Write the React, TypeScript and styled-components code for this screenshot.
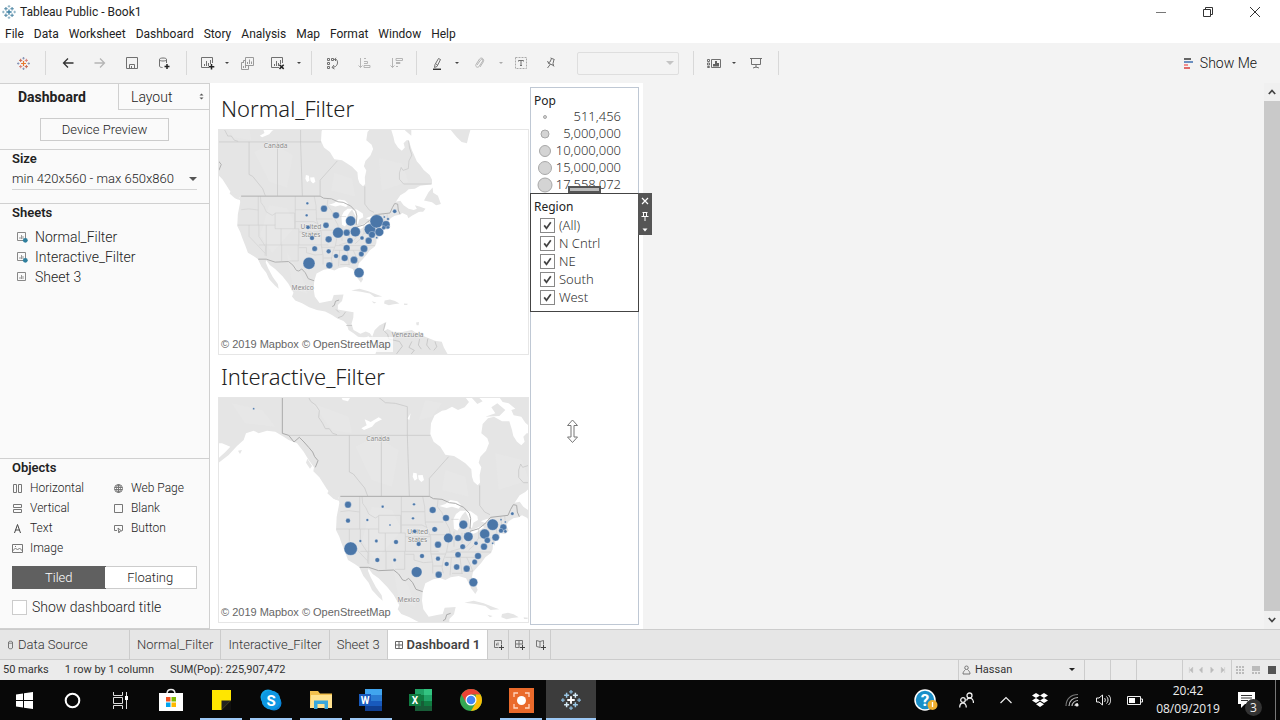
import React from "react";
import styled, { createGlobalStyle, css } from "styled-components";

const ui = `Roboto, "Liberation Sans", sans-serif`;
const system = `"Open Sans", "Noto Sans", sans-serif`;
const viz = `"Noto Sans", "Open Sans", sans-serif`;

const GlobalStyle = createGlobalStyle`
  * { box-sizing: border-box; }
  body { margin: 0; background: #f3f3f3; color: #333; font-family: ${ui}; font-size: 14px; }
  button, input, select { font: inherit; color: inherit; }
  button { border: 0; padding: 0; background: none; }
  h1, h2, h3, ul { margin: 0; padding: 0; font: inherit; list-style: none; }
  svg { display: block; }
`;

const Window = styled.div`
  display: flex;
  flex-direction: column;
  min-height: 100vh;
`;

/* ---------- title and menu ---------- */

const TitleBar = styled.header`
  display: flex;
  align-items: center;
  height: 22px;
  padding: 1px 2px 0;
  background: #fff;
  font: 12px/20px ${ui};
  color: #222;
`;
const AppTitle = styled.h1`
  flex: 1;
  padding-left: 4px;
`;
const WindowButton = styled.button`
  display: grid;
  place-items: center;
  width: 47px;
  height: 20px;
`;
const MenuBar = styled.nav`
  display: flex;
  gap: 10px;
  height: 21px;
  padding: 3px 0 0 5px;
  background: #fff;
  font: 12px/18px ${ui};
  color: #222;
`;
const MenuItem = styled.button`
  height: 18px;
`;

/* ---------- toolbar ---------- */

const Toolbar = styled.div`
  display: flex;
  align-items: center;
  height: 40px;
  padding-left: 7px;
  background: #f3f3f3;
`;
const ToolButton = styled.button<{ $w?: number; $faded?: boolean }>`
  display: grid;
  place-items: center;
  width: ${(p) => p.$w ?? 32}px;
  height: 28px;
  color: ${(p) => (p.$faded ? "#b5b5b5" : "#707070")};
`;
const CaretButton = styled.button<{ $faded?: boolean }>`
  width: 12px;
  height: 28px;
  display: grid;
  place-items: center;
  &::after {
    content: "";
    border: 2px solid transparent;
    border-top-color: ${(p) => (p.$faded ? "#aaa" : "#444")};
    border-bottom: 0;
  }
`;
const Divider = styled.span`
  width: 1px;
  height: 24px;
  margin: 0 6px;
  background: #d8d8d8;
`;
const arrow = (color: string) => css`
  position: relative;
  &::after {
    content: "";
    position: absolute;
    right: 5px;
    top: 50%;
    margin-top: -2px;
    border: 4px solid transparent;
    border-top-color: ${color};
    border-bottom: 0;
    pointer-events: none;
  }
`;
const FitBox = styled.label`
  ${arrow("#c4c4c4")}
  display: block;
  width: 102px;
  margin: 0 8px 0 10px;
`;
const FitSelect = styled.select`
  display: block;
  appearance: none;
  width: 100%;
  height: 23px;
  border: 1px solid #d6d6d6;
  border-radius: 2px;
  background: #f3f3f3;
`;
const ShowMe = styled.button`
  display: flex;
  align-items: center;
  gap: 6px;
  margin: 0 23px 0 auto;
  font-size: 14px;
  font-weight: 300;
  color: #111;
`;

/* ---------- workspace ---------- */

const Workspace = styled.div`
  display: flex;
  flex: 1;
  min-height: 546px;
`;
const Sidebar = styled.aside`
  display: flex;
  flex-direction: column;
  width: 210px;
  border: 1px solid #d0d0d0;
  border-width: 1px 1px 0 0;
  background: #fafafa;
  font-weight: 300;
  color: #222;
`;
const SideTabs = styled.div`
  display: flex;
  height: 26px;
`;
const SideTab = styled.button<{ $active?: boolean }>`
  flex: ${(p) => (p.$active ? "0 0 118px" : "1")};
  padding: 0 12px;
  text-align: left;
  ${(p) =>
    p.$active
      ? css`
          padding-left: 18px;
          font-weight: 700;
          color: #222;
        `
      : css`
          display: flex;
          align-items: center;
          justify-content: space-between;
          padding-right: 5px;
          border: 1px solid #d0d0d0;
          border-width: 0 0 1px 1px;
        `}
`;
const Section = styled.section<{ $h?: number }>`
  padding: 0 12px;
  border-bottom: 1px solid #d0d0d0;
  ${(p) => (p.$h ? `height: ${p.$h}px;` : "flex: 1;")}
`;
const SectionTitle = styled.h2`
  height: 18px;
  line-height: 18px;
  font-weight: 600;
  font-size: 13px;
  color: #222;
`;
const PreviewButton = styled.button`
  display: block;
  width: 129px;
  height: 23px;
  margin: 8px 0 0 28px;
  border: 1px solid #ccc;
  font-size: 13px;
`;
const SizeBox = styled.label`
  ${arrow("#555")}
  display: block;
  width: 185px;
  &::after {
    right: 0;
  }
`;
const SizeSelect = styled.select`
  display: block;
  appearance: none;
  width: 100%;
  height: 22px;
  padding: 0 14px 0 0;
  border: 0;
  border-bottom: 1px solid #d6d6d6;
  background: transparent;
  font-size: 13px;
`;
const SheetList = styled.ul`
  padding-top: 5px;
`;
const SheetRow = styled.li`
  display: flex;
  align-items: center;
  gap: 7px;
  height: 20px;
  padding-left: 4px;
`;
const ObjectGrid = styled.ul`
  display: grid;
  grid-template-columns: 101px 1fr;
  grid-auto-rows: 20px;
  padding-top: 1px;
  font-size: 12px;
`;
const ObjectItem = styled.li`
  display: flex;
  align-items: center;
  gap: 7px;
`;
const Segmented = styled.div`
  display: grid;
  grid-template-columns: 1fr 1fr;
  height: 23px;
  margin-top: 8px;
  border: 1px solid #ccc;
`;
const Segment = styled.button<{ $on?: boolean }>`
  margin: ${(p) => (p.$on ? "-1px" : "0")};
  font-size: 13px;
  background: ${(p) => (p.$on ? "#606060" : "#fff")};
  color: ${(p) => (p.$on ? "#fff" : "#222")};
`;
const TitleToggle = styled.label`
  display: flex;
  align-items: center;
  gap: 5px;
  height: 36px;
`;
const Tick = styled.input`
  appearance: none;
  flex: none;
  width: 15px;
  height: 15px;
  margin: 0;
  border: 1px solid #ccc;
  background: #fff;
  &:checked {
    border-color: #888;
    background: #fff
      url("data:image/svg+xml,%3Csvg xmlns='http://www.w3.org/2000/svg' viewBox='0 0 13 13'%3E%3Cpath d='M3.2 6.4l2.3 2.9 4.3-6' fill='none' stroke='%23444' stroke-width='1.7'/%3E%3C/svg%3E");
  }
`;

/* ---------- dashboard ---------- */

const Canvas = styled.main`
  display: flex;
  flex: 1;
`;
const DashboardSheet = styled.div`
  display: flex;
  width: 433px;
  padding: 4px 4px 4px 8px;
  background: #fff;
`;
const Views = styled.div`
  width: 311px;
`;
const ViewTitle = styled.h2`
  height: 42px;
  padding: 0 3px;
  font: 300 22px/42px ${viz};
  color: #222;
`;
const MapFrame = styled.div`
  position: relative;
  height: 226px;
  border: 1px solid #e6e6e6;
  overflow: hidden;
`;
const Credit = styled.span`
  position: absolute;
  left: 0;
  bottom: 2px;
  padding: 0 2px;
  background: rgba(255, 255, 255, 0.75);
  font: 11px/15px "Liberation Sans", sans-serif;
  color: #666;
`;
const LegendColumn = styled.div`
  display: flex;
  flex-direction: column;
  width: 109px;
  margin-left: 1px;
  border: 1px solid #bfc8d4;
  font: 300 13px/17px ${viz};
  color: #333;
`;
const CardTitle = styled.h3`
  padding-left: 3px;
  font: 12px/18px ${viz};
  color: #222;
`;
const SizeLegend = styled.section`
  position: relative;
  height: 105px;
  padding-top: 4px;
`;
const SizeList = styled.ul`
  margin-top: -2px;
`;
const SizeRow = styled.li`
  display: flex;
  align-items: center;
  height: 17px;
  padding: 0 17px 0 4px;
`;
const Bubble = styled.svg`
  width: 20px;
  height: 16px;
`;
const SizeValue = styled.span`
  flex: 1;
  text-align: right;
`;
const DragHandle = styled.span`
  position: absolute;
  left: 37px;
  bottom: 0;
  width: 33px;
  height: 7px;
  border: 2px solid #555;
  background: #bbb;
`;
const FilterCard = styled.section`
  position: relative;
  height: 119px;
  margin: 0 -1px;
  padding-top: 4px;
  border: 1px solid #444;
`;
const FilterRow = styled.label`
  display: flex;
  align-items: center;
  gap: 4px;
  height: 18px;
  padding: 1px 0 0 9px;
`;
const CardTools = styled.div`
  position: absolute;
  left: 100%;
  top: -1px;
  display: grid;
  width: 14px;
  height: 42px;
  background: #555;
  color: #fff;
`;
const CardTool = styled.button`
  display: grid;
  place-items: center;
`;
const ResizePointer = styled.svg`
  margin: 107px 0 0 35px;
`;
const Scrollbar = styled.div`
  display: flex;
  flex-direction: column;
  width: 16px;
  background: #f0f0f0;
`;
const ScrollButton = styled.button`
  display: grid;
  place-items: center;
  height: 18px;
`;
const ScrollThumb = styled.div`
  flex: 1;
  background: #c9c9c9;
`;

/* ---------- sheet tabs and status ---------- */

const TabStrip = styled.nav`
  display: flex;
  height: 30px;
  border-top: 1px solid #ccc;
  background: #e6e6e6;
  color: #333;
`;
const SheetTab = styled.button<{ $active?: boolean; $wide?: boolean }>`
  display: flex;
  align-items: center;
  gap: 4px;
  width: ${(p) => (p.$wide ? "130px" : "auto")};
  padding: 0 7px;
  border-right: 1px solid #ccc;
  font-size: 13px;
  font-weight: 300;
  ${(p) => p.$active && "background: #fff; font-weight: 600; color: #444;"}
`;
const NewTab = styled.button`
  display: grid;
  place-items: center;
  width: 21px;
  border-right: 1px solid #ccc;
  color: #777;
`;
const StatusBar = styled.footer`
  display: flex;
  height: 21px;
  border-top: 1px solid #ccc;
  background: #ebebeb;
  font-size: 11px;
  line-height: 20px;
  color: #333;
`;
const Marks = styled.div`
  display: flex;
  flex: 1;
  gap: 16px;
  padding-left: 3px;
`;
const StatusCell = styled.div<{ $w: number }>`
  display: flex;
  align-items: center;
  justify-content: space-around;
  width: ${(p) => p.$w}px;
  border-left: 1px solid #ccc;
`;
const UserBox = styled.label`
  ${arrow("#222")}
  display: flex;
  align-items: center;
  gap: 4px;
  width: 126px;
  padding-left: 3px;
  border-left: 1px solid #ccc;
  color: #777;
  &::after {
    right: 9px;
    border-width: 3px 3px 0;
  }
`;
const UserSelect = styled.select`
  appearance: none;
  flex: 1;
  min-width: 0;
  border: 0;
  background: transparent;
  font-size: 11px;
  color: #333;
`;

/* ---------- taskbar ---------- */

const Taskbar = styled.div`
  display: flex;
  align-items: center;
  height: 40px;
  background: #080808;
  color: #eee;
`;
const TaskGroup = styled.div<{ $gap?: number }>`
  display: flex;
  margin-left: ${(p) => p.$gap ?? 0}px;
`;
const TaskButton = styled.button<{ $w?: number; $open?: boolean; $active?: boolean }>`
  display: grid;
  place-items: center;
  width: ${(p) => p.$w ?? 50}px;
  height: 40px;
  background: ${(p) => (p.$active ? "#3c3c3c" : "none")};
  ${(p) =>
    p.$open &&
    css`
      position: relative;
      &::after {
        content: "";
        position: absolute;
        inset: auto ${p.$active ? 0 : 4}px 0;
        height: 2px;
        background: #9cc8f5;
      }
    `}
`;
const Tray = styled.div`
  display: flex;
  align-items: center;
  margin-left: auto;
`;
const Clock = styled.time`
  width: 72px;
  text-align: center;
  font: 12px/18px ${system};
`;
const Notifications = styled.button`
  position: relative;
  display: grid;
  place-items: center;
  width: 52px;
  height: 40px;
  padding-right: 6px;
  border-right: 1px solid #777;
  margin-right: 4px;
`;
const Count = styled.span`
  position: absolute;
  left: 21px;
  top: 19px;
  width: 17px;
  height: 17px;
  border-radius: 50%;
  background: #333;
  font: 12px/17px ${system};
  text-align: center;
`;

/* ---------- icons ---------- */

type IconProps = { w?: number; h?: number; box?: string; sw?: number; color?: string; children: React.ReactNode };
const Icon = ({ w = 14, h = 14, box, sw = 1, color = "currentColor", children }: IconProps) => (
  <svg width={w} height={h} viewBox={box ?? `0 0 ${w} ${h}`} fill="none" stroke={color} strokeWidth={sw} aria-hidden="true">
    {children}
  </svg>
);

const TableauMark = ({ size, colors }: { size: number; colors: string[] }) => (
  <Icon w={size} h={size} box="0 0 16 16" sw={1.2}>
    <path d="M8 5v6M5 8h6" stroke={colors[0]} strokeWidth={1.5} />
    <path d="M4.500 2.200v4M2.500 4.200h4M11.500 9.800v4M9.500 11.800h4" stroke={colors[1]} />
    <path d="M11.500 2.200v4M9.500 4.200h4M4.500 9.800v4M2.500 11.800h4" stroke={colors[2]} />
    <path d="M8 0v3M6.500 1.500h3M8 13v3M6.500 14.500h3M1.500 6.500v3M0 8h3M14.500 6.500v3M13 8h3" stroke={colors[3]} strokeWidth={1} />
  </Icon>
);

const SheetGlyph = ({ used }: { used?: boolean }) => (
  <Icon w={12} h={12}>
    <path d="M1.500 1.500h8v8h-8z" stroke="#888" />
    <path d="M4 8V6M5.500 8V4M7 8V5" stroke="#999" />
    {used && <circle cx="9.300" cy="9.300" r="2.400" fill="#2f7f9d" stroke="none" />}
  </Icon>
);
const ChartBox = ({ mark }: { mark: string }) => (
  <Icon w={15} h={14}>
    <path d="M9 11.500H1.500V1.500h11V7" />
    <path d="M4.500 10V8M6.500 10V5M8.500 10V7M10.500 8V4" />
    <path d={mark} stroke="#222" strokeWidth={1.5} />
  </Icon>
);

/* ---------- maps ---------- */

const LAND =
  "M-60 60H18L18 112H760L771 126 758 142 738 150 720 140 702 150 690 152 668 166 657 190 655 222 665 245 685 260 700 284 726 288 742 298 760 310 778 328 780 350 785 365 797 376 804 368 803 345 808 322 800 308 805 290 822 272 831 250 826 235 808 220 812 192 828 175 846 170 870 184 892 184 900 210 904 228 915 245 928 256 938 245 934 230 944 220 951 219 956 235 962 253 979 292 990 304 1002 321 1022 338 1030 354 1030 369 990 374 972 384 951 386 940 396 923 406 908 428 923 425 934 440 951 452 968 456 985 450 990 460 962 475 950 484 946 474 930 466 920 472 904 475 890 484 883 496 890 512 880 522 864 520 861 538 850 543 848 557 843 550 842 568 836 580 820 592 808 608 796 622 783 636 780 650 790 670 797 690 790 702 778 686 771 672 762 655 740 648 716 652 700 660 684 654 664 658 640 670 632 696 630 722 634 748 650 770 675 765 692 762 698 743 731 741 726 763 712 777 712 792 740 797 765 801 764 820 758 840 765 861 788 874 806 866 820 872 828 884 836 862 852 846 876 833 872 850 866 866 880 858 900 868 930 868 962 861 978 872 1007 884 1040 898 1063 901 1070 920 1084 945 838 945 846 920 850 905 838 893 826 896 816 882 800 888 780 884 765 872 748 861 742 842 731 831 710 822 692 811 669 799 641 794 615 784 591 771 568 762 557 748 562 735 545 705 525 680 500 655 482 642 470 626 468 632 476 652 492 682 509 706 512 722 500 712 480 690 470 668 454 648 442 622 428 612 408 600 400 578 388 548 382 530 372 510 374 470 382 430 380 412 372 420 345 388 335 372 322 352 304 334 306 322 290 300 275 275 255 250 230 240 215 230 190 215 165 212 140 220 125 212 102 220 95 240 75 258 50 285 20 308 18 296 40 276 55 260 30 250 18 250Z";
const ISLANDS =
  "M350 392L378 410 384 424 364 416 346 400ZM778 112L800 112 812 124 796 132ZM820 170L850 160 838 142 856 130 880 150 862 168ZM862 112H960V205L940 188 928 170 905 166 898 150 910 146 890 130 872 126ZM1003 424L1018 396 1032 380 1034 398 1050 408 1060 436 1044 440 1030 430ZM972 440L990 445 1008 452 1000 462 984 462ZM1092 184H1160L1154 205 1148 230 1130 226 1112 208ZM757 728L785 722 815 730 845 742 862 748 836 750 820 738 790 732ZM870 762L888 758 905 763 920 772 900 774 884 778 868 772ZM826 764L842 768 834 772ZM935 772L948 773 946 777 936 777ZM976 836L986 834 985 845 978 845ZM78 272L90 270 84 282ZM286 296L300 318 294 326 282 308Z";
const LAKES =
  "M448 205L464 196 458 178 476 186 500 172 510 178 490 188 480 200 456 210ZM388 112L415 112 408 124 392 120ZM604 338L614 340 616 356 608 362 602 350ZM618 346L632 345 636 360 628 366 620 358ZM586 176L596 160 592 180ZM682 438L700 432 715 420 736 424 748 436 740 446 720 440 704 444ZM726 506L724 478 732 462 745 452 762 452 750 466 742 480 744 500 736 512ZM760 454L776 454 796 468 798 480 784 488 780 504 772 500 772 478ZM766 520L786 508 812 496 816 502 792 518 776 524ZM806 484L826 476 836 480 822 490Z";
const SHADE =
  "M60 130l90 20 40 50-90-10zM430 260l60-30 70 40-20 110-60-20zM300 130l110 40 10 50-60-10zM640 120l50 10-30 40-40 10zM850 280l80 20 20 60-90 30zM700 330l60 20 10 60-80-20zM540 600l50 80 20 60-50-20zM480 440l60 10 30 60-80 90-40-60z";
const BORDERS =
  "M211 112V220L230 226 246 246 262 232 276 246 290 262 302 276 308 290 318 302 310 322M385 409H652L664 416 690 418 712 428 730 430 755 442 772 460 776 476 774 506M774 514L800 506 818 492 836 472 888 466 896 448 904 434 914 436 916 456 922 470M443 622H470L500 632 545 630 560 642 572 660 580 662 590 655 602 668 612 688 632 695M693 782L700 778 704 764 716 760";
const SOUTHERN_BORDERS =
  "M706 792L716 802M738 800L728 814 712 820M740 846L760 846M872 838L866 862 880 876 884 892 920 900 930 916 910 942M962 900L952 920 970 930 960 942M988 892L984 912 994 926M1016 890L1012 912 1024 928M1040 900L1046 918 1036 930";
const PROVINCES =
  "M230 226H655M290 112L296 124 312 136 322 152 320 172 332 190 340 206 352 206 362 220 375 224M412 226V336L424 342 440 362 458 384 467 408M508 226V408M500 112L520 128 550 130 586 140V226L592 408M652 408V355L710 290M803 376V436L818 456 834 464M951 222L954 246 962 270 952 290 950 316 932 322 926 312 920 330 920 352 934 368 1028 368";
const STATES =
  "M385 455L410 452 443 456M443 409V507M373 507H500M450 409L452 430 462 444 470 462 490 474 500 468M500 466H566V519H500ZM568 409V519M568 455H638M568 495H630L644 502M566 519H580V530H654M445 507V545L468 580 466 610M470 507V612M412 507V545L466 602M520 519V574H445M580 530V574M522 574V628M578 574V628M548 628H578M520 574H680M580 583H606V600L634 608 660 606M632 409L638 440 640 490 648 512 656 530V574L662 610V640M640 486H694M648 524H700M678 420L676 440 690 458 700 484 712 506 716 530 708 552 704 574 694 600 690 622 694 640M656 582H700M664 618H692M718 478H740M726 514V560M750 518V548M704 576H838M700 592H790M718 592L714 646M744 592L750 642M720 640H752M764 592L778 622 782 634M752 634H782M774 514L776 546 762 562 744 566 716 574M800 506V534H850M800 534L786 556 770 570M812 534L830 548M840 534L846 548M852 500L856 530M866 470L870 500M878 468L880 490M864 500H884M862 510H880";

const Geography = () => (
  <g strokeLinejoin="round">
    <path d={LAND} fill="#e5e5e5" />
    <path d={ISLANDS} fill="#e5e5e5" />
    <path d={SHADE} fill="#e7e7e7" />
    <path d={LAKES} fill="#fff" />
    <g fill="none" stroke="#cfcfcf" strokeWidth="2">
      <path d={STATES} />
      <path d={PROVINCES} stroke="#c2c2c2" />
      <path d={SOUTHERN_BORDERS} stroke="#b5b5b5" />
      <path d={BORDERS} stroke="#aaa" strokeWidth="3" />
    </g>
  </g>
);

type Dot = [number, number, number];
type Label = [number, number, string];

const NORMAL_DOTS: Dot[] = [
  [286, 355, 4], [284, 391, 4], [288, 427, 6], [300, 459, 7], [308, 491, 8], [336, 371, 10], [342, 421, 9], [372, 391, 10],
  [350, 463, 10], [350, 499, 7], [291, 535, 18], [352, 541, 10], [372, 513, 7], [378, 443, 16], [404, 443, 10], [416, 408, 15],
  [430, 440, 15], [414, 467, 9], [404, 489, 10], [398, 519, 10], [426, 525, 11], [441, 563, 15], [448, 507, 8], [456, 491, 11],
  [450, 459, 6], [470, 467, 10], [474, 433, 17], [494, 409, 20], [502, 441, 13], [480, 449, 10], [494, 458, 3], [522, 419, 12],
  [528, 402, 4], [517, 396, 3], [548, 379, 6], [515, 428, 6], [528, 427, 5],
];
const INTERACTIVE_DOTS: Dot[] = [
  [125, 146, 3], [408, 434, 10], [408, 482, 7], [466, 480, 4], [512, 440, 4], [534, 495, 3], [606, 433, 4], [603, 475, 4],
  [416, 566, 20], [445, 543, 4], [493, 543, 5], [552, 546, 7], [496, 600, 7], [548, 600, 5], [608, 514, 6], [620, 552, 7],
  [630, 588, 7], [614, 636, 16], [662, 450, 10], [668, 508, 8], [702, 474, 10], [678, 554, 10], [678, 596, 7], [680, 644, 10],
  [704, 612, 7], [709, 534, 14], [738, 534, 10], [754, 494, 13], [769, 530, 14], [752, 560, 8], [738, 584, 9], [734, 621, 9],
  [764, 626, 10], [784, 667, 13], [788, 606, 8], [798, 588, 10], [792, 550, 6], [816, 560, 10], [818, 522, 15], [842, 494, 17],
  [826, 541, 9], [851, 532, 11], [842, 550, 3], [874, 502, 10], [867, 512, 7], [880, 514, 5], [880, 486, 3], [867, 479, 3],
  [901, 461, 5],
];

type MapProps = { name: string; box: string; place?: string; labels: Label[]; dots: Dot[] };
const BubbleMap = ({ name, box, place, labels, dots }: MapProps) => (
  <MapFrame>
    <svg width="309" height="224" viewBox={box} role="img" aria-label={name}>
      <g transform={place}>
        <Geography />
      </g>
      <g fill="#8a8a8a" stroke="#f0f0f0" strokeWidth="3" paintOrder="stroke" fontFamily={viz} fontSize="20" textAnchor="middle">
        {labels.map(([x, y, text]) => (
          <text key={text} x={x} y={y}>{text}</text>
        ))}
      </g>
      <g fill="#4a76a8" stroke="#e6eef6" strokeWidth="1">
        {dots.map(([x, y, r]) => (
          <circle key={`${x}-${y}`} cx={x} cy={y} r={r} />
        ))}
      </g>
    </svg>
    <Credit>© 2019 Mapbox © OpenStreetMap</Credit>
  </MapFrame>
);

/* ---------- data ---------- */

const MENUS = ["File", "Data", "Worksheet", "Dashboard", "Story", "Analysis", "Map", "Format", "Window", "Help"];
const SIZES: [string, number][] = [["511,456", 1.5], ["5,000,000", 4], ["10,000,000", 5.5], ["15,000,000", 6.5], ["17,558,072", 7]];
const REGIONS = ["(All)", "N Cntrl", "NE", "South", "West"];
const OBJECTS: [string, React.ReactNode][] = [
  ["Horizontal", <path key="i" d="M1.500 1.500h3v8h-3zM6.500 1.500h3v8h-3z" />],
  ["Web Page", <path key="i" d="M1.500 5.500a4 4 0 1 0 8 0a4 4 0 1 0-8 0M3.500 5.500a2 4 0 1 0 4 0a2 4 0 1 0-4 0M1.500 4.500h8M1.500 6.500h8M5.500 1.500v8" />],
  ["Vertical", <path key="i" d="M1.500 1.500h8v3h-8zM1.500 6.500h8v3h-8z" />],
  ["Blank", <path key="i" d="M1.500 1.500h8v8h-8z" />],
  ["Text", <path key="i" d="M2.500 10L5.500 1.500 8.500 10M3.500 7h4" stroke="#444" />],
  ["Button", <path key="i" d="M4 7.500H1.500v-5h8v5H8.500M5 5l3.500 3-1.800.2-.8 1.800z" />],
  ["Image", <path key="i" d="M.5 1.500h10v8H.5zM.5 8l3-3 2 2 2-2 3 3M3 3.500h1" />],
];

const App = () => (
  <Window>
    <GlobalStyle />
    <TitleBar>
      <TableauMark size={14} colors={["#3b7ea1", "#4f87a5", "#4f87a5", "#7fa8bd"]} />
      <AppTitle>Tableau Public - Book1</AppTitle>
      <WindowButton aria-label="Minimize"><Icon w={12} h={12}><path d="M1 6.500h10" stroke="#777" /></Icon></WindowButton>
      <WindowButton aria-label="Restore"><Icon w={12} h={12}><path d="M1.500 3.500h7v7h-7zM3.500 3V1.500h7v7H9" stroke="#333" /></Icon></WindowButton>
      <WindowButton aria-label="Close"><Icon w={12} h={12}><path d="M1 1l10 10M11 1L1 11" stroke="#333" /></Icon></WindowButton>
    </TitleBar>
    <MenuBar>
      {MENUS.map((m) => <MenuItem key={m}>{m}</MenuItem>)}
    </MenuBar>

    <Toolbar>
      <ToolButton aria-label="Start page"><TableauMark size={13} colors={["#e8762d", "#c9654f", "#d9827a", "#7d8bb0"]} /></ToolButton>
      <Divider />
      <ToolButton aria-label="Undo"><Icon w={12} h={12} sw={1.3}><path d="M11.500 6H1.500M6 1.500L1.500 6 6 10.500" stroke="#333" /></Icon></ToolButton>
      <ToolButton aria-label="Redo" $faded><Icon w={12} h={12} sw={1.3}><path d="M.5 6h10M6 1.500L10.500 6 6 10.500" /></Icon></ToolButton>
      <ToolButton aria-label="Save"><Icon w={12} h={12}><path d="M.5 .5h11v11H.5zM3.500 11V7.500h5V11M5.500 9v2" /></Icon></ToolButton>
      <ToolButton aria-label="New data source">
        <Icon w={13} h={13}>
          <path d="M1.500 2.500c0-1.200 1.800-1.500 3.500-1.500s3.500.3 3.500 1.500S6.700 4 5 4 1.500 3.700 1.500 2.500V9c0 1 1.300 1.500 3 1.500M8.500 2.500V6" />
          <path d="M9 7v5M6.500 9.500h5" stroke="#222" strokeWidth={1.500} />
        </Icon>
      </ToolButton>
      <Divider />
      <ToolButton $w={28} aria-label="New worksheet"><ChartBox mark="M11.500 8v5.500M8.800 10.800h5.500" /></ToolButton>
      <CaretButton aria-label="New worksheet options" />
      <ToolButton $w={28} aria-label="Duplicate" $faded><Icon w={13} h={13}><path d="M4.500 .5h8v8h-8zM4 3.500H2.500V6M2.500 5.500h-2v7h7V9M6.500 7V5M8.500 7V2.500M10.500 7V4.500M2.500 11V9M4.500 11V8" stroke="#999" /></Icon></ToolButton>
      <ToolButton aria-label="Clear sheet"><ChartBox mark="M9.500 8.700l4.200 4.200M13.700 8.700L9.500 12.900" /></ToolButton>
      <CaretButton aria-label="Clear options" />
      <Divider />
      <ToolButton $w={28} aria-label="Swap rows and columns"><Icon w={13} h={13}><path d="M1.500 1.500h2v2h-2zM5.500 1.500h2v2h-2zM1.500 5.500h2v2h-2zM1.500 9.500h2v2h-2zM8.500 2.500h2c1.500 2 1.500 5-1 7l-3 1M10 .8L8.500 2.500 10 4M8 8l-2 2.500 2.500 1.500" /></Icon></ToolButton>
      <ToolButton $w={36} aria-label="Sort ascending" $faded><Icon w={13} h={12}><path d="M2.500 1v9.500M.5 8.500l2 2 2-2M6 1.500h2M6 4.500h3.500v2H6M6 8.500h6v2H6z" /></Icon></ToolButton>
      <ToolButton $w={28} aria-label="Sort descending" $faded><Icon w={13} h={12}><path d="M2.500 1v9.500M.5 8.500l2 2 2-2M6 1.500h6.500v2H6zM6 5.500h4v1H6M6 9.500h2" /></Icon></ToolButton>
      <Divider />
      <ToolButton $w={28} aria-label="Highlight"><Icon w={10} h={13}><path d="M6.500 1.500l2 1-3.500 7-2.500 1 .5-3zM4 7l1.500 1" /><path d="M1 12.300h8" stroke="#333" strokeWidth={1.500} /></Icon></ToolButton>
      <CaretButton aria-label="Highlight options" />
      <ToolButton aria-label="Group" $faded><Icon w={11} h={12}><path d="M3 8l4-5.500c1-1 2.500 0 1.700 1.500L5 9.500c-1.500 1.700-4 .2-3-2L5.500 2c1.500-2 5-.5 4 2.500L6 10" /></Icon></ToolButton>
      <CaretButton aria-label="Group options" $faded />
      <ToolButton $w={28} aria-label="Show mark labels"><Icon w={12} h={12}><rect x=".5" y=".5" width="11" height="11" strokeDasharray="2 1" stroke="#aaa" /><path d="M3.500 4.500v-1h5v1M6 3.500v5M5 8.500h2" /></Icon></ToolButton>
      <ToolButton aria-label="Pin axes"><Icon w={10} h={12}><path d="M4.500 1l4 1.500M5.500 1.500L4 5 2 6l5.500 2.500L7 6.500l1-4M4.500 7l-3 4M1 4.500l2 1M8 9.500l-1-2" /></Icon></ToolButton>
      <FitBox><FitSelect aria-label="Fit" disabled /></FitBox>
      <Divider />
      <ToolButton $w={28} aria-label="Show or hide cards"><Icon w={14} h={11}><path d="M4.500 1.500h9v8h-9zM.5 1.500h2v2h-2zM.5 5h2v2h-2zM.5 8.500h2v1h-2z" /><path d="M7 8.500V6M9 8.500V3M11 8.500V5" stroke="#333" strokeWidth={1.500} /></Icon></ToolButton>
      <CaretButton aria-label="Card options" />
      <ToolButton aria-label="Presentation mode"><Icon w={12} h={12}><path d="M0 1.500h12M1.500 2v5.500h9V2M6 7.500v3M3 11l3-1 3 1" /></Icon></ToolButton>
      <Divider />
      <ShowMe>
        <Icon w={10} h={11} sw={2}><path d="M0 1h7" stroke="#666" /><path d="M0 4h9" stroke="#6b8fc0" /><path d="M0 7h4" stroke="#f09090" /><path d="M0 10h6" stroke="#e06a6a" /></Icon>
        Show Me
      </ShowMe>
    </Toolbar>

    <Workspace>
      <Sidebar>
        <SideTabs>
          <SideTab $active>Dashboard</SideTab>
          <SideTab>
            Layout
            <Icon w={5} h={7}><path d="M.5 2.500l2-2 2 2zM.5 4.500l2 2 2-2z" fill="#555" stroke="none" /></Icon>
          </SideTab>
        </SideTabs>
        <Section $h={40}>
          <PreviewButton>Device Preview</PreviewButton>
        </Section>
        <Section $h={54}>
          <SectionTitle>Size</SectionTitle>
          <SizeBox>
            <SizeSelect aria-label="Size"><option>min 420x560 - max 650x860</option></SizeSelect>
          </SizeBox>
        </Section>
        <Section>
          <SectionTitle>Sheets</SectionTitle>
          <SheetList>
            <SheetRow><SheetGlyph used />Normal_Filter</SheetRow>
            <SheetRow><SheetGlyph used />Interactive_Filter</SheetRow>
            <SheetRow><SheetGlyph />Sheet 3</SheetRow>
          </SheetList>
        </Section>
        <Section $h={170}>
          <SectionTitle>Objects</SectionTitle>
          <ObjectGrid>
            {OBJECTS.map(([label, art]) => (
              <ObjectItem key={label}><Icon w={11} h={11} color="#777">{art}</Icon>{label}</ObjectItem>
            ))}
          </ObjectGrid>
          <Segmented>
            <Segment $on>Tiled</Segment>
            <Segment>Floating</Segment>
          </Segmented>
          <TitleToggle><Tick type="checkbox" />Show dashboard title</TitleToggle>
        </Section>
      </Sidebar>

      <Canvas>
        <DashboardSheet>
          <Views>
            <ViewTitle>Normal_Filter</ViewTitle>
            <BubbleMap
              name="Normal_Filter map"
              box="21 135 927 672"
              place="translate(-254.6 -29.8) scale(.888)"
              labels={[[191, 188, "Canada"], [297, 433, "United"], [297, 455, "States"], [272, 615, "Mexico"], [587, 755, "Venezuela"]]}
              dots={NORMAL_DOTS}
            />
            <ViewTitle>Interactive_Filter</ViewTitle>
            <BubbleMap
              name="Interactive_Filter map"
              box="21 114 927 672"
              labels={[[498, 243, "Canada"], [617, 521, "United"], [617, 545, "States"], [590, 727, "Mexico"]]}
              dots={INTERACTIVE_DOTS}
            />
          </Views>
          <LegendColumn>
            <SizeLegend>
              <CardTitle>Pop</CardTitle>
              <SizeList>
                {SIZES.map(([value, r]) => (
                  <SizeRow key={value}>
                    <Bubble viewBox="0 0 20 16"><circle cx="10" cy="8" r={r} fill="#d4d4d4" stroke="#a8a8a8" /></Bubble>
                    <SizeValue>{value}</SizeValue>
                  </SizeRow>
                ))}
              </SizeList>
              <DragHandle />
            </SizeLegend>
            <FilterCard>
              <CardTitle>Region</CardTitle>
              {REGIONS.map((r) => (
                <FilterRow key={r}><Tick type="checkbox" defaultChecked />{r}</FilterRow>
              ))}
              <CardTools>
                <CardTool aria-label="Remove"><Icon w={8} h={8} sw={1.200}><path d="M1 1l6 6M7 1L1 7" /></Icon></CardTool>
                <CardTool aria-label="Pin"><Icon w={8} h={9}><path d="M1.500 .5h5M2.500 .5v4M5.500 .5v4M.5 4.500h7M4 4.500V9" /></Icon></CardTool>
                <CardTool aria-label="More options"><Icon w={6} h={4}><path d="M.5 .5h5L3 3.500z" fill="#fff" stroke="none" /></Icon></CardTool>
              </CardTools>
            </FilterCard>
            <ResizePointer width="13" height="25" viewBox="0 0 13 25" fill="#fff" stroke="#777">
              <path d="M6.500 1L11.500 6.500H8V18h3.500L6.500 23.500 1.500 18H5V6.500H1.500z" />
            </ResizePointer>
          </LegendColumn>
        </DashboardSheet>
      </Canvas>
      <Scrollbar>
        <ScrollButton aria-label="Scroll up"><Icon w={8} h={6} sw={1.700}><path d="M.8 5L4 1.500 7.200 5" stroke="#444" /></Icon></ScrollButton>
        <ScrollThumb />
        <ScrollButton aria-label="Scroll down"><Icon w={8} h={6} sw={1.700}><path d="M.8 1L4 4.500 7.200 1" stroke="#444" /></Icon></ScrollButton>
      </Scrollbar>
    </Workspace>

    <TabStrip>
      <SheetTab $wide>
        <Icon w={7} h={10} color="#777"><path d="M1.500 2c0-1 4-1 4 0v6c0 1-4 1-4 0zM1.500 2.500c0 1 4 1 4 0" /></Icon>
        Data Source
      </SheetTab>
      <SheetTab>Normal_Filter</SheetTab>
      <SheetTab>Interactive_Filter</SheetTab>
      <SheetTab>Sheet 3</SheetTab>
      <SheetTab $active>
        <Icon w={8} h={8} color="#666"><path d="M.5 .5h7v7h-7zM4 .5v7M.5 4h7" /></Icon>
        Dashboard 1
      </SheetTab>
      <NewTab aria-label="New worksheet"><Icon w={11} h={11}><path d="M5.500 8.500h-4v-7h7v4M3.500 6.500v-2M5 6.500v-3" /><path d="M8.500 6v5M6 8.500h5" stroke="#444" /></Icon></NewTab>
      <NewTab aria-label="New dashboard"><Icon w={11} h={11}><path d="M5.500 8.500h-4v-7h7v4M1.500 5h7M5 1.500v7" /><path d="M8.500 6v5M6 8.500h5" stroke="#444" /></Icon></NewTab>
      <NewTab aria-label="New story"><Icon w={11} h={11}><path d="M5.500 8.500l-4-1v-6l3.500 1 3.500-1v4M5 2.500v6" /><path d="M8.500 6v5M6 8.500h5" stroke="#444" /></Icon></NewTab>
    </TabStrip>

    <StatusBar>
      <Marks>
        <span>50 marks</span>
        <span>1 row by 1 column</span>
        <span>SUM(Pop): 225,907,472</span>
      </Marks>
      <UserBox>
        <Icon w={9} h={10}><path d="M4.500 1a1.700 1.700 0 1 1 0 3.500a1.700 1.700 0 1 1 0-3.500M3.500 4.500C2 6 1 7 1 9h7c0-2-1-3-2.500-4.500" /></Icon>
        <UserSelect aria-label="User"><option>Hassan</option></UserSelect>
      </UserBox>
      <StatusCell $w={26} />
      <StatusCell $w={26} />
      <StatusCell $w={46} />
      <StatusCell $w={49}>
        <Icon w={40} h={6} box="0 0 42 6"><path d="M2.500 0v6M6 0v6L3 3zM16 0v6l-3-3zM25 0v6l3-3zM36 0v6l3-3zM39.500 0v6" fill="#bbb" stroke="#bbb" strokeWidth=".5" /></Icon>
      </StatusCell>
      <StatusCell $w={49}>
        <Icon w={8} h={8}><path d="M0 1h8M0 4h8M0 7h8" strokeDasharray="2 1" strokeWidth="2" stroke="#bbb" /></Icon>
        <Icon w={8} h={8}><path d="M0 2.500h8" strokeWidth="5" stroke="#bbb" /><path d="M0 7h8" strokeDasharray="2 1" strokeWidth="2" stroke="#bbb" /></Icon>
        <Icon w={8} h={8}><path d="M0 0h8v8H0z" fill="#555" stroke="none" /></Icon>
      </StatusCell>
    </StatusBar>

    <Taskbar>
      <TaskGroup>
        <TaskButton $w={48} aria-label="Start"><svg width="17" height="17" viewBox="0 0 17 17" fill="#fff"><path d="M0 2.500l7-1V8H0zM8 1.300L17 0v8H8zM0 9h7v6.500l-7-1zM8 9h9v8l-9-1.300z" /></svg></TaskButton>
        <TaskButton $w={48} aria-label="Cortana"><Icon w={17} h={17} sw={2}><circle cx="8.500" cy="8.500" r="6.800" stroke="#fff" /></Icon></TaskButton>
        <TaskButton $w={48} aria-label="Task view"><Icon w={17} h={17}><path d="M1.500 0v3.500h9V0M1.500 5.500h9v6h-9zM1.500 17v-3.500h9V17M14.500 0v17" stroke="#ddd" /><path d="M14.500 4v4" stroke="#fff" strokeWidth="3" /></Icon></TaskButton>
      </TaskGroup>
      <TaskGroup $gap={2}>
        <TaskButton aria-label="Store">
          <svg width="24" height="24" viewBox="0 0 24 24"><path d="M8 6c0-6 8-6 8 0" fill="none" stroke="#eee" strokeWidth="1.500" /><path d="M0 5h24v18H0z" fill="#fff" /><path d="M7 9h4.500v4.500H7z" fill="#f25022" /><path d="M12.500 9H17v4.500h-4.500z" fill="#7fba00" /><path d="M7 14.500h4.500V19H7z" fill="#00a4ef" /><path d="M12.500 14.500H17V19h-4.500z" fill="#ffb900" /></svg>
        </TaskButton>
        <TaskButton $open aria-label="Sticky Notes"><svg width="19" height="20" viewBox="0 0 19 20"><path d="M0 0h19v11l-9 9H0z" fill="#ffe600" /><path d="M19 10.500V20H9.500z" fill="#111" /><path d="M19 10.500h-9.500V20z" fill="#222" /></svg></TaskButton>
        <TaskButton $open aria-label="Skype">
          <svg width="22" height="22" viewBox="0 0 22 22"><circle cx="8" cy="8" r="7.500" fill="#12a5e8" /><circle cx="14" cy="14" r="7.500" fill="#0a84d8" /><circle cx="11" cy="11" r="9.500" fill="#0d97e2" /><text x="11" y="16.500" fill="#fff" fontFamily="Roboto" fontWeight="700" fontSize="15" textAnchor="middle">S</text></svg>
        </TaskButton>
        <TaskButton $open aria-label="File Explorer"><svg width="22" height="20" viewBox="0 0 22 20"><path d="M0 1h8l2 2.500h12V18H0z" fill="#f2c04e" /><path d="M1 5h21v13H0z" fill="#ffe28f" /><path d="M4 19v-8.500h14V19h-3.500v-5h-7v5z" fill="#38a8dd" /></svg></TaskButton>
        <TaskButton $open aria-label="Word">
          <svg width="24" height="23" viewBox="0 0 24 23"><path d="M6 0h17v6H6z" fill="#41a5ee" /><path d="M6 6h17v6H6z" fill="#2b7cd3" /><path d="M6 12h17v5H6z" fill="#185abd" /><path d="M6 17h17v5H6z" fill="#103f91" /><path d="M0 5h12v12H0z" fill="#185abd" /><text x="6" y="14.500" fill="#fff" fontFamily="Roboto" fontWeight="700" fontSize="10" textAnchor="middle">W</text></svg>
        </TaskButton>
        <TaskButton aria-label="Excel">
          <svg width="24" height="23" viewBox="0 0 24 23"><path d="M6 0h9v6H6z" fill="#21a366" /><path d="M15 0h8v6h-8z" fill="#33c481" /><path d="M6 6h9v6H6z" fill="#107c41" /><path d="M15 6h8v6h-8z" fill="#21a366" /><path d="M6 12h17v10H6z" fill="#185c37" /><path d="M15 12h8v5h-8z" fill="#107c41" /><path d="M0 5h12v12H0z" fill="#107c41" /><text x="6" y="14.500" fill="#fff" fontFamily="Roboto" fontWeight="700" fontSize="10" textAnchor="middle">X</text></svg>
        </TaskButton>
        <TaskButton aria-label="Chrome">
          <svg width="22" height="22" viewBox="0 0 22 22"><circle cx="11" cy="11" r="11" fill="#34a853" /><path d="M1.500 5.500A11 11 0 0 1 20.500 5.500H11L6.200 13.800z" fill="#ea4335" /><path d="M20.500 5.500A11 11 0 0 1 11 22L15.800 13.800V5.500z" fill="#fbbc05" /><circle cx="11" cy="11" r="5.500" fill="#fff" /><circle cx="11" cy="11" r="4.300" fill="#4285f4" /></svg>
        </TaskButton>
        <TaskButton $open aria-label="Screen recorder">
          <svg width="25" height="25" viewBox="0 0 25 25"><path d="M0 0h25v25H0z" fill="#ea6a2b" /><circle cx="12.500" cy="12.500" r="4.500" fill="#fff" /><path d="M5 9V5h4M16 5h4v4M20 16v4h-4M9 20H5v-4" fill="none" stroke="#ffd5bf" strokeWidth="1.300" /></svg>
        </TaskButton>
        <TaskButton $open $active aria-label="Tableau Public"><TableauMark size={20} colors={["#fff", "#9cc9e6", "#d6ebf7", "#8ab8d8"]} /></TaskButton>
      </TaskGroup>
      <Tray>
        <TaskButton $w={41} aria-label="Help">
          <svg width="24" height="22" viewBox="0 0 24 22"><circle cx="11" cy="11" r="10" fill="#1a8fc8" stroke="#fff" strokeWidth="1.500" /><text x="11" y="17" fill="#fff" fontFamily="Roboto" fontWeight="700" fontSize="17" textAnchor="middle">?</text><circle cx="18.500" cy="16" r="5" fill="#f0b030" /><path d="M18.500 13v5" stroke="#fff" strokeWidth="1.300" /></svg>
        </TaskButton>
        <TaskButton $w={41} aria-label="People"><Icon w={15} h={16} sw={1.300}><circle cx="10.500" cy="3.500" r="2.500" /><circle cx="4" cy="8" r="2.300" /><path d="M14.500 11c0-6-6-6-7-2.500M.7 15.500c0-6 6.600-6 6.600 0" /></Icon></TaskButton>
        <TaskButton $w={37} aria-label="Show hidden icons"><Icon w={12} h={8} sw={1.200}><path d="M.5 7L6 1.500 11.500 7" /></Icon></TaskButton>
        <TaskButton $w={32} aria-label="Dropbox"><svg width="16" height="14" viewBox="0 0 16 14" fill="#fff"><path d="M4 0l4 2.500L4 5 0 2.500zM12 0l4 2.500L12 5 8 2.500zM4 5l4 2.500L4 10 0 7.500zM12 5l4 2.500-4 2.500-4-2.500zM8 8.800l4 2.500L8 14l-4-2.700z" /></svg></TaskButton>
        <TaskButton $w={32} aria-label="Wi-Fi"><Icon w={14} h={14} sw={1.200}><path d="M1 13C1 6 6 1.500 13 1.500" stroke="#777" /><path d="M4 13c0-5 4-8.500 9-8.500M7 13c0-3 3-5.500 6-5.500M10 13c0-1.500 1.500-2.500 3-2.500" stroke="#bbb" /><circle cx="12" cy="12" r="1" fill="#fff" /></Icon></TaskButton>
        <TaskButton $w={30} aria-label="Volume"><Icon w={15} h={12}><path d="M.5 4h2.500L6.500 1v10L3 8H.5zM8.500 4c1 1 1 3 0 4M10.500 2.500c2 2 2 5 0 7M12.500 1c3 3 3 7 0 10" /></Icon></TaskButton>
        <TaskButton $w={34} aria-label="Battery"><Icon w={16} h={9}><path d="M.5 .5h13v8H.5zM14 3h1.500v3H14" /><path d="M2 2h6v5H2z" fill="#fff" stroke="none" /></Icon></TaskButton>
        <Clock>20:42<br />08/09/2019</Clock>
        <Notifications aria-label="Notifications">
          <svg width="17" height="16" viewBox="0 0 17 16"><path d="M0 0h17v12H7l-4 4v-4H0z" fill="#fff" /><path d="M3 3.500h11M3 6h11M3 8.500h7" stroke="#333" /></svg>
          <Count>3</Count>
        </Notifications>
      </Tray>
    </Taskbar>
  </Window>
);

export default App;
